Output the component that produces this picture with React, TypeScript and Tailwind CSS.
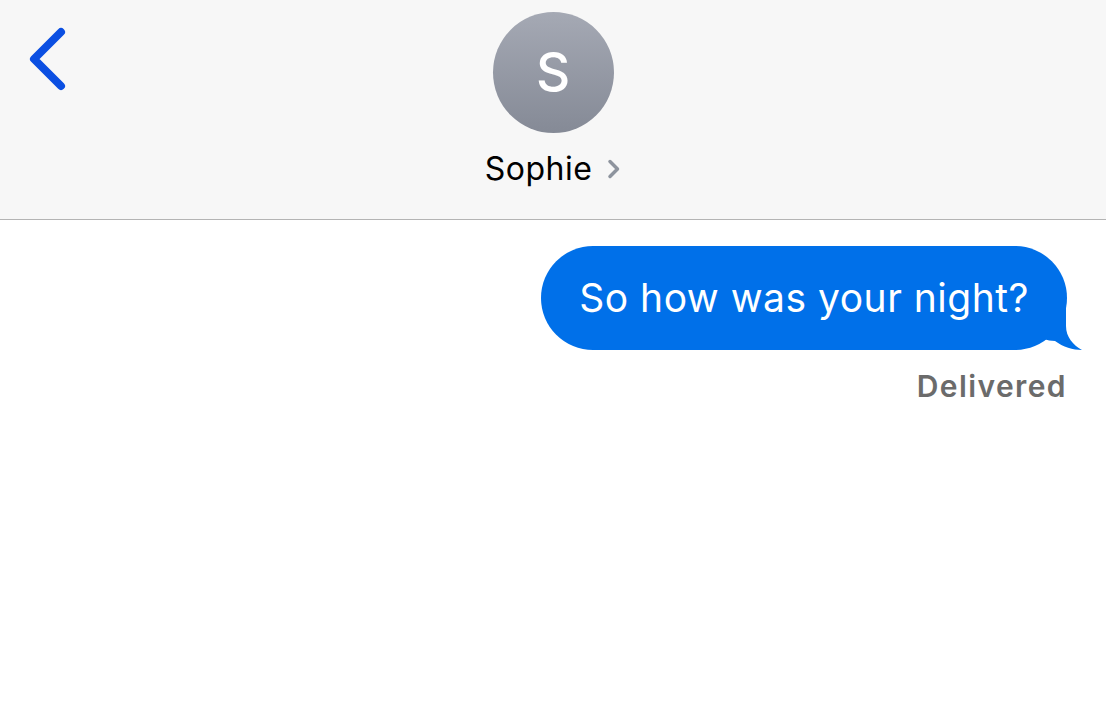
import React from 'react';

const BackChevron = () => (
  <svg width="44" height="70" viewBox="0 0 44 70" className="block">
    <path d="M33 5 L6 32 L33 59" fill="none" stroke="#0b4fe2" strokeWidth="8" strokeLinecap="round" strokeLinejoin="round" />
  </svg>
);

const SmallChevron = () => (
  <svg width="14" height="22" viewBox="0 0 14 22" className="block">
    <path d="M3 3.5 L10.5 11 L3 18.5" fill="none" stroke="#8e949e" strokeWidth="3.5" strokeLinecap="round" strokeLinejoin="round" />
  </svg>
);

const Bubble = ({ text }: { text: string }) => (
  <div className="relative">
    <div className="bg-[#0070e9] text-white rounded-[52px] h-[104px] px-[38px] flex items-center text-[39px] tracking-[0.5px]">
      {text}
    </div>
    {/* tail */}
    <svg width="40" height="42" viewBox="0 0 40 42" className="absolute right-[-17px] bottom-0">
      <path d="M0 0 L22 0 L22 18 C22 29 29 37 38 42 C29 42 19 39 11 33 C7 33 3 32 0 31 Z" fill="#0070e9" />
    </svg>
  </div>
);

export default function App() {
  return (
    <div className="w-[1106px] h-[722px] bg-white font-['Inter','Noto_Sans',sans-serif] overflow-hidden">
      <header className="relative h-[220px] bg-[#f7f7f7] border-b border-[#b4b4b4] flex flex-col items-center">
        <div className="absolute left-[28px] top-[27px]">
          <BackChevron />
        </div>
        <div className="mt-[12px] w-[121px] h-[121px] rounded-full bg-gradient-to-b from-[#a5a9b4] to-[#858a96] flex items-center justify-center text-white text-[53px] font-medium leading-none">
          S
        </div>
        <div className="mt-[16px] flex items-center gap-[15px]">
          <span className="text-[32px] text-black leading-[40px] tracking-[0.5px]">Sophie</span>
          <SmallChevron />
        </div>
      </header>
      <main className="flex flex-col items-end pr-[39px] pt-[26px]">
        <Bubble text="So how was your night?" />
        <div className="mt-[16px] text-[30px] font-semibold text-[#6b6b6b] leading-[40px] tracking-[1.4px]">Delivered</div>
      </main>
    </div>
  );
}
